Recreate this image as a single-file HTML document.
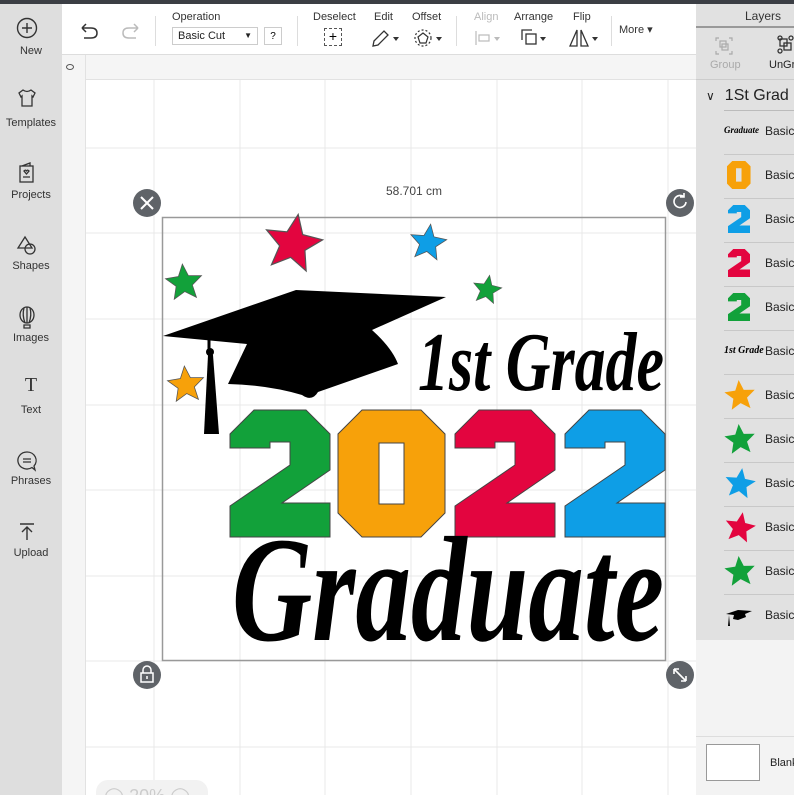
<!DOCTYPE html>
<html><head><meta charset="utf-8"><style>
*{margin:0;padding:0;box-sizing:border-box}
body{width:794px;height:795px;overflow:hidden;font-family:"Liberation Sans",sans-serif;background:#fff;position:relative}
.a{position:absolute}
.side{left:0;top:4px;width:62px;height:791px;background:#dedede}
.si{position:absolute;left:0;width:62px;text-align:center;font-size:11px;color:#333}
.tb{left:62px;top:4px;width:634px;height:51px;background:#fff;border-bottom:1px solid #ddd}
.lbl{position:absolute;font-size:11px;color:#333}
.rp{left:696px;top:4px;width:98px;height:791px;background:#e1e1e1}
.row{position:absolute;left:28px;width:70px;height:44px;border-top:1px solid #c8c8c8}
.row span{position:absolute;left:41px;top:13px;font-size:12px;color:#222}
</style></head><body>
<div class="a" style="left:0;top:0;width:794px;height:4px;background:#3b3e44"></div>
<div class="a side">
<svg class="a" style="left:16px;top:12px" width="30" height="30" viewBox="0 0 30 30" fill="none" stroke="#333" stroke-width="1.4"><circle cx="11" cy="12" r="9.5"/><path d="M11 7v10M6 12h10"/></svg>
<div class="si" style="top:41px">New</div>
<svg class="a" style="left:17px;top:84px" width="20" height="20" viewBox="0 0 20 20" fill="none" stroke="#333" stroke-width="1.3"><path d="M6 2 L2 5 L4 9 L5 8 V18 H15 V8 L16 9 L18 5 L14 2 Q10 5 6 2Z"/></svg>
<div class="si" style="top:113px">Templates</div>
<svg class="a" style="left:18px;top:158px" width="18" height="22" viewBox="0 0 18 22" fill="none" stroke="#333" stroke-width="1.3"><rect x="2" y="4" width="13" height="16"/><path d="M4 4 L12 1 V4 M6 9 Q8 7 8.5 9.5 Q9 7 11 9 L8.5 12Z M5 15h7"/></svg>
<div class="si" style="top:185px">Projects</div>
<svg class="a" style="left:16px;top:230px" width="22" height="22" viewBox="0 0 22 22" fill="none" stroke="#333" stroke-width="1.3"><path d="M9 3 L2 14 H16Z"/><circle cx="14" cy="15" r="5"/></svg>
<div class="si" style="top:256px">Shapes</div>
<svg class="a" style="left:18px;top:302px" width="18" height="24" viewBox="0 0 18 24" fill="none" stroke="#333" stroke-width="1.3"><ellipse cx="9" cy="9" rx="7" ry="8"/><path d="M9 1v16 M6 2 Q4 9 7 17 M12 2 Q14 9 11 17 M6 19h6v3H6z"/></svg>
<div class="si" style="top:328px">Images</div>
<div class="si" style="top:370px;font-size:20px;font-family:'Liberation Serif',serif">T</div>
<div class="si" style="top:400px">Text</div>
<svg class="a" style="left:16px;top:446px" width="22" height="22" viewBox="0 0 22 22" fill="none" stroke="#333" stroke-width="1.3"><path d="M11 2a9 8.5 0 1 0 5 15.5 L19 20 L18 16 A9 8.5 0 0 0 11 2Z M7 9h8M7 12h8"/></svg>
<div class="si" style="top:471px">Phrases</div>
<svg class="a" style="left:18px;top:518px" width="18" height="20" viewBox="0 0 18 20" fill="none" stroke="#333" stroke-width="1.4"><path d="M2 2h14 M9 5v13 M4 10 L9 5 L14 10"/></svg>
<div class="si" style="top:543px">Upload</div>
</div>

<div class="a tb">
<svg class="a" style="left:16px;top:18px" width="64" height="20" viewBox="0 0 64 20" fill="none" stroke-width="1.5"><path d="M4 6 H13 Q19 6 19 11 Q19 16 13 16 H6 M4 6 L8 2 M4 6 L8 10" stroke="#333"/><path d="M60 6 H51 Q45 6 45 11 Q45 16 51 16 H58 M60 6 L56 2 M60 6 L56 10" stroke="#bbb"/></svg>
<div class="a" style="left:93px;top:12px;width:1px;height:30px;background:#ddd"></div>
<div class="lbl" style="left:110px;top:7px">Operation</div>
<div class="a" style="left:110px;top:23px;width:86px;height:18px;border:1px solid #ccc;font-size:11px;padding:2px 0 0 5px;color:#222">Basic Cut<span style="position:absolute;right:5px;top:3px;font-size:8px">▼</span></div>
<div class="a" style="left:202px;top:23px;width:18px;height:18px;border:1px solid #ccc;font-size:10px;text-align:center;padding-top:3px">?</div>
<div class="a" style="left:235px;top:12px;width:1px;height:30px;background:#ddd"></div>
<div class="lbl" style="left:251px;top:7px">Deselect</div>
<div class="a" style="left:262px;top:24px;width:18px;height:18px;border:1px dashed #555;text-align:center;font-size:14px;line-height:15px">+</div>
<div class="lbl" style="left:312px;top:7px">Edit</div>
<svg class="a" style="left:309px;top:24px" width="30" height="20" viewBox="0 0 30 20" fill="none" stroke="#333" stroke-width="1.3"><path d="M2 18 L3 13 L13 3 L17 7 L7 17Z"/><path d="M22 9h6l-3 4z" fill="#333" stroke="none"/></svg>
<div class="lbl" style="left:350px;top:7px">Offset</div>
<svg class="a" style="left:351px;top:24px" width="30" height="20" viewBox="0 0 30 20" fill="none" stroke="#333" stroke-width="1.2"><path d="M10 5 L15 9 L13 15 H7 L5 9Z"/><circle cx="10" cy="10" r="8" stroke-dasharray="2 2"/><path d="M23 9h6l-3 4z" fill="#333" stroke="none"/></svg>
<div class="a" style="left:394px;top:12px;width:1px;height:30px;background:#ddd"></div>
<div class="lbl" style="left:412px;top:7px;color:#bbb">Align</div>
<svg class="a" style="left:412px;top:26px" width="30" height="16" viewBox="0 0 30 16" fill="none" stroke="#bbb" stroke-width="1.2"><path d="M2 1v14"/><rect x="5" y="5" width="10" height="6"/><path d="M20 7h6l-3 4z" fill="#bbb" stroke="none"/></svg>
<div class="lbl" style="left:452px;top:7px">Arrange</div>
<svg class="a" style="left:458px;top:24px" width="30" height="20" viewBox="0 0 30 20" fill="none" stroke="#333" stroke-width="1.3"><path d="M2 12V2h10"/><rect x="6" y="6" width="10" height="10"/><path d="M20 9h6l-3 4z" fill="#333" stroke="none"/></svg>
<div class="lbl" style="left:511px;top:7px">Flip</div>
<svg class="a" style="left:506px;top:24px" width="32" height="20" viewBox="0 0 32 20" fill="none" stroke="#333" stroke-width="1.3"><path d="M9 2 L2 18 H9Z M13 2 L20 18 H13Z"/><path d="M24 9h6l-3 4z" fill="#333" stroke="none"/></svg>
<div class="a" style="left:549px;top:12px;width:1px;height:30px;background:#ddd"></div>
<div class="lbl" style="left:557px;top:19px">More ▾</div>
</div>

<div class="a" style="left:62px;top:55px;width:634px;height:25px;background:#f5f5f5;border-bottom:1px solid #e2e2e2"></div>
<div class="a" style="left:62px;top:55px;width:24px;height:740px;background:#f5f5f5;border-right:1px solid #e2e2e2"></div>
<div class="a" style="left:66px;top:64px;width:8px;height:6px;border:1px solid #555;border-radius:50%"></div>

<svg class="a" style="left:86px;top:80px" width="610" height="715">
<g stroke="#e8e8e8" stroke-width="1">
<path d="M68 0V715M154 0V715M239 0V715M325 0V715M411 0V715M496 0V715M582 0V715"/>
<path d="M0 68H610M0 153H610M0 239H610M0 325H610M0 410H610M0 496H610M0 581H610M0 667H610"/>
</g>
<rect x="10" y="700" width="112" height="30" rx="12" fill="#f2f2f2"/>
<text x="18" y="722" font-size="18" fill="#ccc" font-family="Liberation Sans">◯ 20%  ◯</text>
</svg>

<svg class="a" style="left:0;top:0" width="696" height="795">
<defs>
<polygon id="st" points="0,-1 0.265,-0.364 0.951,-0.309 0.428,0.139 0.588,0.809 0,0.45 -0.588,0.809 -0.428,0.139 -0.951,-0.309 -0.265,-0.364"/>
<path id="d2" d="M0,38 L0,24 L24,0 L76,0 L100,24 L100,60 L52,93 L100,93 L100,127 L0,127 L0,96 L60,55 L60,32 L40,32 L40,38 Z"/>
<path id="d0" fill-rule="evenodd" d="M24,0 H83 L107,24 V103 L83,127 H24 L0,103 V24 Z M41,33 H66 V94 H41 Z"/>
</defs>
<rect x="162.5" y="217.5" width="503" height="443" fill="none" stroke="#999" stroke-width="1.5"/>
<text x="414" y="195" font-size="12" fill="#444" text-anchor="middle" font-family="Liberation Sans">58.701 cm</text>
<circle cx="147" cy="203" r="14" fill="#5f6368"/><path d="M141 197l12 12M153 197l-12 12" stroke="#fff" stroke-width="2"/>
<circle cx="680" cy="203" r="14" fill="#5f6368"/><path d="M686 202a6 6 0 1 1-2-5M684 193v4h-4" stroke="#fff" stroke-width="1.6" fill="none"/>
<circle cx="147" cy="675" r="14" fill="#5f6368"/><rect x="141" y="673" width="12" height="9" fill="none" stroke="#fff" stroke-width="1.5"/><path d="M143 673v-3a4 4 0 0 1 8 0v3M147 676v3" stroke="#fff" stroke-width="1.5" fill="none"/>
<circle cx="680" cy="675" r="14" fill="#5f6368"/><path d="M674 669l12 12M674 669v5M674 669h5M686 681v-5M686 681h-5" stroke="#fff" stroke-width="1.6" fill="none"/>
<g stroke="#555" stroke-width="0.04">
<use href="#st" transform="translate(293,244) rotate(10) scale(30)" fill="#e3053f"/>
<use href="#st" transform="translate(428,243) rotate(8) scale(19)" fill="#0e9ee6"/>
<use href="#st" transform="translate(184,283) rotate(-5) scale(19)" fill="#12a13a"/>
<use href="#st" transform="translate(487,290) rotate(10) scale(15)" fill="#12a13a"/>
<use href="#st" transform="translate(186,385) rotate(-5) scale(19)" fill="#f7a10a"/>
</g>
<path d="M163,336 L296,290 L446,297 L372,330 Q392,348 398,364 L318,392 Q312,402 302,395 Q268,385 228,384 L247,344 Z" fill="#000"/>
<path d="M209,340 V350" stroke="#000" stroke-width="3"/><circle cx="210" cy="352" r="4"/>
<path d="M208,355 L204,434 H219 L213,355Z"/>
<g stroke="#444" stroke-width="1">
<use href="#d2" x="230" y="410" fill="#12a13a"/>
<use href="#d0" x="338" y="410" fill="#f7a10a"/>
<use href="#d2" x="455" y="410" fill="#e3053f"/>
<use href="#d2" x="565" y="410" fill="#0e9ee6"/>
</g>
<text x="418" y="390" font-family="Liberation Serif" font-style="italic" font-weight="bold" font-size="84" textLength="246" lengthAdjust="spacingAndGlyphs">1st Grade</text>
<text x="232" y="640" font-family="Liberation Serif" font-style="italic" font-weight="bold" font-size="150" textLength="432" lengthAdjust="spacingAndGlyphs">Graduate</text>
</svg>

<div class="a rp">
<div class="a" style="left:0;top:0;width:98px;height:24px;text-align:center;font-size:12px;color:#333;padding-top:5px;padding-left:36px;border-bottom:2px solid #999">Layers</div>
<svg class="a" style="left:19px;top:33px" width="18" height="18" viewBox="0 0 18 18" fill="none" stroke="#aaa" stroke-width="1.2"><path d="M1 4V1h3M14 1h3v3M17 14v3h-3M4 17H1v-3"/><rect x="5" y="4" width="6" height="6"/><rect x="7" y="7" width="6" height="6"/></svg>
<div class="a" style="left:14px;top:55px;font-size:11px;color:#aaa">Group</div>
<svg class="a" style="left:81px;top:31px" width="17" height="20" viewBox="0 0 17 20" fill="none" stroke="#333" stroke-width="1.3"><rect x="3" y="4" width="7" height="7"/><rect x="7" y="8" width="7" height="7"/><circle cx="3" cy="3" r="2"/><circle cx="14" cy="3" r="2"/><circle cx="3" cy="16" r="2"/></svg>
<div class="a" style="left:73px;top:55px;font-size:11px;color:#222;white-space:nowrap">UnGr</div>
<div class="a" style="left:0;top:75px;width:98px;height:1px;background:#ccc"></div>
<div class="a" style="left:10px;top:83px;font-size:16px;color:#222;white-space:nowrap"><span style="font-size:12px;margin-right:10px">∨</span>1St Grad</div>
<svg class="a" style="left:28px;top:150px" width="32" height="176">
<use href="#d0" transform="translate(3,7) scale(0.22)" fill="#f7a10a"/>
<use href="#d2" transform="translate(4,51) scale(0.22)" fill="#0e9ee6"/>
<use href="#d2" transform="translate(4,95) scale(0.22)" fill="#e3053f"/>
<use href="#d2" transform="translate(4,139) scale(0.22)" fill="#12a13a"/>
</svg>
<div class="row" style="top:106px;border-top-color:#bbb"><span style="left:41px">Basic</span><i style="position:absolute;left:0;top:14px;font-size:9px;font-family:'Liberation Serif';font-weight:bold">Graduate</i></div>
<div class="row" style="top:150px"><span>Basic</span></div>
<div class="row" style="top:194px"><span>Basic</span></div>
<div class="row" style="top:238px"><span>Basic</span></div>
<div class="row" style="top:282px"><span>Basic</span></div>
<div class="row" style="top:326px"><span>Basic</span><i style="position:absolute;left:0;top:14px;font-size:10px;font-family:'Liberation Serif';font-weight:bold">1st Grade</i></div>
<svg class="a" style="left:28px;top:370px" width="32" height="264">
<use href="#st" transform="translate(16,22) rotate(-5) scale(16)" fill="#f7a10a"/>
<use href="#st" transform="translate(16,66) rotate(-5) scale(16)" fill="#12a13a"/>
<use href="#st" transform="translate(16,110) rotate(8) scale(16)" fill="#0e9ee6"/>
<use href="#st" transform="translate(16,154) rotate(10) scale(16)" fill="#e3053f"/>
<use href="#st" transform="translate(16,198) rotate(-5) scale(16)" fill="#12a13a"/>
<path d="M2,240 L14,236 L28,237 L21,240 L22,243 L14,246 L9,245 L10,241Z M5,241 L4,252 H6Z" fill="#000"/>
</svg>
<div class="row" style="top:370px"><span>Basic</span></div>
<div class="row" style="top:414px"><span>Basic</span></div>
<div class="row" style="top:458px"><span>Basic</span></div>
<div class="row" style="top:502px"><span>Basic</span></div>
<div class="row" style="top:546px"><span>Basic</span></div>
<div class="row" style="top:590px"><span>Basic</span></div>
<div class="a" style="left:0;top:636px;width:98px;height:96px;background:#f3f3f3"></div>
<div class="a" style="left:0;top:732px;width:98px;height:59px;background:#f3f3f3;border-top:1px solid #ddd"></div>
<div class="a" style="left:10px;top:740px;width:54px;height:37px;background:#fff;border:1px solid #999"></div>
<div class="a" style="left:74px;top:753px;font-size:11px;color:#222">Blank</div>
</div>
</body></html>
